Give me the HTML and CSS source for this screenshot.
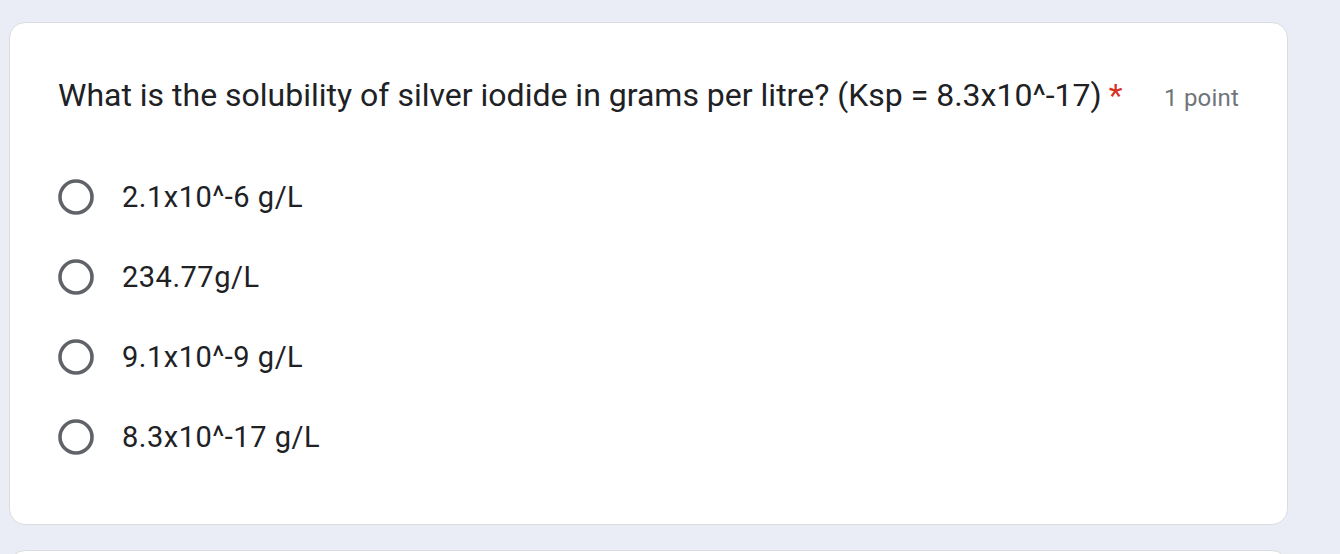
FILE: index.html
```html
<!DOCTYPE html>
<html>
<head>
<meta charset="utf-8">
<link rel="stylesheet" href="styles.css">
</head>
<body>
<div class="page">
  <div class="card">
    <div class="q-head">
      <div class="q-title">What is the solubility of silver iodide in grams per litre? (Ksp = 8.3x10^-17)<span class="req">*</span></div>
      <div class="points">1 point</div>
    </div>
    <div class="options">
      <label class="opt"><svg class="radio" width="36" height="36" viewBox="0 0 36 36"><circle cx="18" cy="18" r="16" fill="none" stroke="#5f6368" stroke-width="3.6"/></svg><span>2.1x10^-6 g/L</span></label>
      <label class="opt"><svg class="radio" width="36" height="36" viewBox="0 0 36 36"><circle cx="18" cy="18" r="16" fill="none" stroke="#5f6368" stroke-width="3.6"/></svg><span>234.77g/L</span></label>
      <label class="opt"><svg class="radio" width="36" height="36" viewBox="0 0 36 36"><circle cx="18" cy="18" r="16" fill="none" stroke="#5f6368" stroke-width="3.6"/></svg><span>9.1x10^-9 g/L</span></label>
      <label class="opt"><svg class="radio" width="36" height="36" viewBox="0 0 36 36"><circle cx="18" cy="18" r="16" fill="none" stroke="#5f6368" stroke-width="3.6"/></svg><span>8.3x10^-17 g/L</span></label>
    </div>
  </div>
  <div class="card next"></div>
</div>
</body>
</html>
```

FILE: styles.css
```css
html, body {
  margin: 0;
  padding: 0;
  background: #ebedf6;
  font-family: Roboto, "Liberation Sans", Arial, sans-serif;
  overflow: hidden;
}
.page {
  padding: 22px 0 0 9px;
  width: 1279px;
  display: flex;
  flex-direction: column;
  gap: 25px;
}
.card {
  background: #fff;
  border: 1px solid #dadce0;
  border-radius: 16px;
  padding: 48px 48px 47px 48px;
}
.card.next {
  height: 200px;
  padding: 0;
}
.q-head {
  display: flex;
  align-items: baseline;
  height: 48px;
}
.q-title {
  flex: 1;
  font-size: 32px;
  line-height: 48px;
  color: #202124;
  letter-spacing: 0;
}
.req {
  color: #d93025;
  padding-left: 7px;
}
.points {
  font-size: 24px;
  color: #70757a;
  letter-spacing: 0.2px;
}
.options {
  display: flex;
  flex-direction: column;
  margin-top: 38px;
}
.opt {
  display: flex;
  align-items: center;
  height: 80px;
  gap: 28px;
  font-size: 29px;
  color: #202124;
  letter-spacing: 0.5px;
}
.radio {
  flex: none;
}
```
